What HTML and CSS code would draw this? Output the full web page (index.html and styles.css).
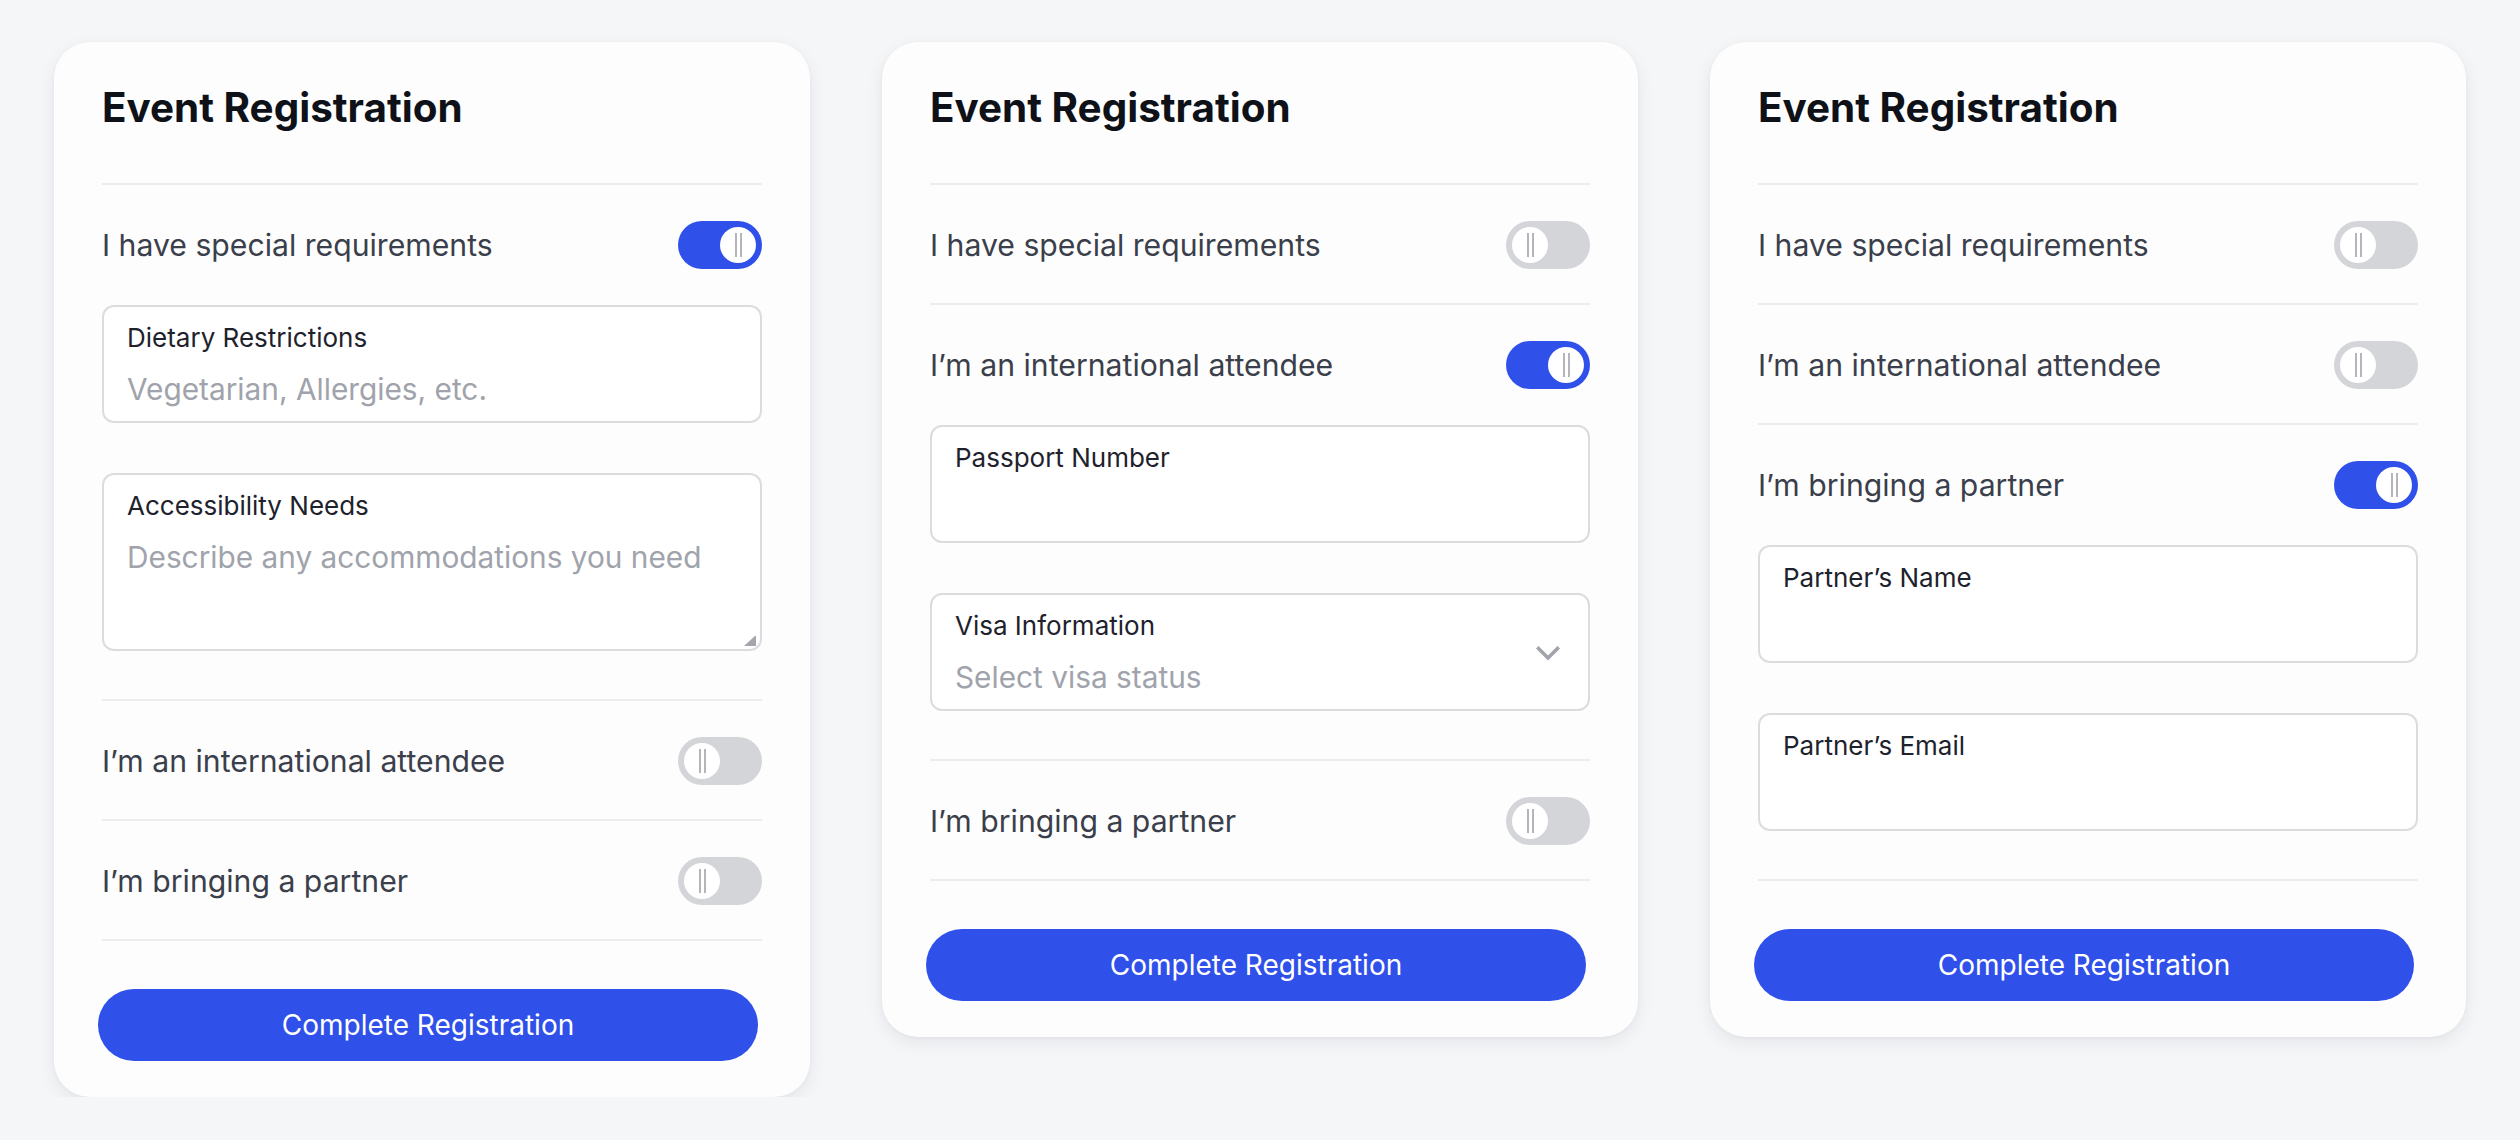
FILE: index.html
```html
<!DOCTYPE html>
<html lang="en">
<head>
<meta charset="utf-8">
<title>Event Registration</title>
<link rel="stylesheet" href="styles.css">
</head>
<body>
<main class="page">

  <!-- Card 1 -->
  <section class="card">
    <header class="card-header"><h2 class="title">Event Registration</h2></header>

    <div class="section">
      <div class="row">
        <span class="row-label">I have special requirements</span>
        <span class="toggle on"><span class="knob"><i></i><i></i></span></span>
      </div>
      <div class="fields">
        <label class="field">
          <span class="field-label">Dietary Restrictions</span>
          <input class="field-input" type="text" placeholder="Vegetarian, Allergies, etc.">
        </label>
        <label class="field field-area">
          <span class="field-label">Accessibility Needs</span>
          <textarea class="field-textarea" placeholder="Describe any accommodations you need"></textarea>
          <span class="grip"></span>
        </label>
      </div>
    </div>

    <div class="section">
      <div class="row">
        <span class="row-label">I’m an international attendee</span>
        <span class="toggle"><span class="knob"><i></i><i></i></span></span>
      </div>
    </div>

    <div class="section">
      <div class="row">
        <span class="row-label">I’m bringing a partner</span>
        <span class="toggle"><span class="knob"><i></i><i></i></span></span>
      </div>
    </div>

    <footer class="card-footer"><button class="submit" type="button">Complete Registration</button></footer>
  </section>

  <!-- Card 2 -->
  <section class="card">
    <header class="card-header"><h2 class="title">Event Registration</h2></header>

    <div class="section">
      <div class="row">
        <span class="row-label">I have special requirements</span>
        <span class="toggle"><span class="knob"><i></i><i></i></span></span>
      </div>
    </div>

    <div class="section">
      <div class="row">
        <span class="row-label">I’m an international attendee</span>
        <span class="toggle on"><span class="knob"><i></i><i></i></span></span>
      </div>
      <div class="fields">
        <label class="field">
          <span class="field-label">Passport Number</span>
          <input class="field-input" type="text">
        </label>
        <label class="field field-select">
          <span class="field-body">
            <span class="field-label">Visa Information</span>
            <span class="field-input placeholder">Select visa status</span>
          </span>
          <svg class="chevron" width="24" height="16" viewBox="0 0 24 16" aria-hidden="true">
            <path d="M2.5 2.5 L12 12 L21.5 2.5" fill="none" stroke="#a1a4ab" stroke-width="3.6" stroke-linecap="square" stroke-linejoin="miter"/>
          </svg>
        </label>
      </div>
    </div>

    <div class="section">
      <div class="row">
        <span class="row-label">I’m bringing a partner</span>
        <span class="toggle"><span class="knob"><i></i><i></i></span></span>
      </div>
    </div>

    <footer class="card-footer"><button class="submit" type="button">Complete Registration</button></footer>
  </section>

  <!-- Card 3 -->
  <section class="card">
    <header class="card-header"><h2 class="title">Event Registration</h2></header>

    <div class="section">
      <div class="row">
        <span class="row-label">I have special requirements</span>
        <span class="toggle"><span class="knob"><i></i><i></i></span></span>
      </div>
    </div>

    <div class="section">
      <div class="row">
        <span class="row-label">I’m an international attendee</span>
        <span class="toggle"><span class="knob"><i></i><i></i></span></span>
      </div>
    </div>

    <div class="section">
      <div class="row">
        <span class="row-label">I’m bringing a partner</span>
        <span class="toggle on"><span class="knob"><i></i><i></i></span></span>
      </div>
      <div class="fields">
        <label class="field">
          <span class="field-label">Partner’s Name</span>
          <input class="field-input" type="text">
        </label>
        <label class="field">
          <span class="field-label">Partner’s Email</span>
          <input class="field-input" type="email">
        </label>
      </div>
    </div>

    <footer class="card-footer"><button class="submit" type="button">Complete Registration</button></footer>
  </section>

</main>
</body>
</html>
```

FILE: styles.css
```css
* { box-sizing: border-box; }

html, body {
  margin: 0;
  padding: 0;
  background: #f5f6f8;
  font-family: Inter, "Noto Sans", "Liberation Sans", sans-serif;
  -webkit-font-smoothing: antialiased;
}

.page {
  display: grid;
  grid-template-columns: repeat(3, 756px);
  column-gap: 72px;
  justify-content: center;
  align-items: start;
  padding-top: 42px;
}

.card {
  background: #fdfdfd;
  border-radius: 36px;
  padding: 0 48px 36px;
  box-shadow: 0 6px 18px rgba(20, 24, 40, 0.07), 0 1px 4px rgba(20, 24, 40, 0.04);
}

.card-header {
  padding-top: 42px;
  padding-bottom: 51px;
  border-bottom: 2px solid #ececee;
}

.title {
  margin: 0;
  font-size: 40.4px;
  line-height: 48px;
  font-weight: 700;
  color: #0e1118;
}

.section {
  padding: 36px 0 34px;
  border-bottom: 2px solid #ececee;
}

.row {
  display: flex;
  align-items: center;
  justify-content: space-between;
  height: 48px;
}

.row-label {
  font-size: 30.2px;
  line-height: 45px;
  color: #3a3f4b;
}

.toggle {
  position: relative;
  display: flex;
  align-items: center;
  width: 84px;
  height: 48px;
  border-radius: 24px;
  background: #d4d5d9;
  padding: 0 6px;
  justify-content: flex-start;
}

.toggle.on {
  background: #3050ea;
  justify-content: flex-end;
}

.knob {
  width: 36px;
  height: 36px;
  border-radius: 50%;
  background: #ffffff;
  display: flex;
  align-items: center;
  justify-content: center;
  gap: 3px;
}

.knob i {
  display: block;
  width: 2px;
  height: 24px;
  background: #b3b5bb;
}

.fields {
  display: flex;
  flex-direction: column;
  gap: 50px;
  margin-top: 36px;
  padding-bottom: 14px;
}

.field {
  position: relative;
  display: block;
  border: 2px solid #dcdcdf;
  border-radius: 12px;
  background: #ffffff;
  padding: 13px 24px 9px 23px;
}

.field-label {
  display: block;
  font-size: 26px;
  line-height: 36px;
  color: #1e222c;
}

.field-input,
.field-textarea {
  display: block;
  width: 100%;
  margin: 11px 0 0;
  padding: 0;
  border: none;
  outline: none;
  background: transparent;
  font-family: inherit;
  font-size: 29.8px;
  line-height: 45px;
  height: 45px;
  color: #1e222c;
}

.field-textarea {
  height: 105px;
  resize: none;
  overflow: hidden;
}

.field-input::placeholder,
.field-textarea::placeholder,
.placeholder {
  color: #a0a3ab;
  opacity: 1;
}

.grip {
  position: absolute;
  right: 4px;
  bottom: 3px;
  width: 12px;
  height: 11px;
  background: #a3a6ad;
  clip-path: polygon(100% 0, 100% 100%, 0 100%);
  border-top-right-radius: 2px;
}

.field-select {
  display: flex;
  align-items: center;
  justify-content: space-between;
  padding-right: 28px;
}

.field-body {
  display: block;
  flex: 1;
}

.chevron {
  flex: none;
  display: block;
}

.card-footer {
  padding-top: 48px;
}

.submit {
  display: block;
  width: 660px;
  height: 72px;
  margin-left: -4px;
  border: none;
  border-radius: 36px;
  background: #3050ea;
  color: #ffffff;
  font-family: inherit;
  font-size: 28px;
  font-weight: 400;
  cursor: pointer;
}
```
